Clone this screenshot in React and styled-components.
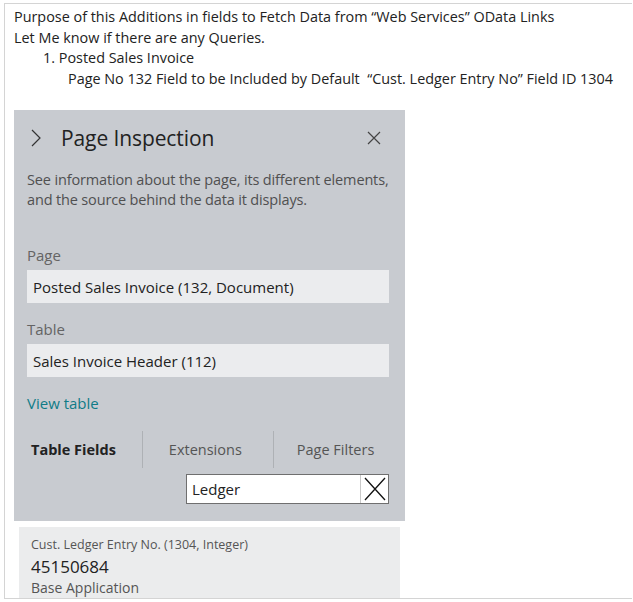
import React from 'react'
import styled, { createGlobalStyle } from 'styled-components'

const GlobalStyle = createGlobalStyle`
    html, body {
        margin: 0;
        padding: 0;
        background: #ffffff;
    }
    body {
        font-family: "Open Sans", "Noto Sans", sans-serif;
        color: #222;
    }
`

const Frame = styled.div`
    margin: 3px 1px 0 4px;
    height: 596px;
    border-top: 1px solid #d4d4d4;
    border-left: 1px solid #d4d4d4;
    border-bottom: 1px solid #d4d4d4;
    padding: 3px 0 0 9px;
    box-sizing: border-box;
    overflow: hidden;
`

const Note = styled.div`
    font-family: "Open Sans", sans-serif;
    font-size: 14.4px;
    line-height: 20.5px;
    color: #222;
    padding-left: ${p => p.indent || 0}px;
    white-space: pre;
`

const Panel = styled.section`
    margin-top: 21px;
    width: 391px;
    background: #c8cbd0;
    padding: 0 16px 17px 13px;
    box-sizing: border-box;
`

const Header = styled.div`
    height: 56px;
    display: flex;
    align-items: center;
    gap: 20px;
    padding-left: 4px;
    padding-right: 8px;
`

const Title = styled.h1`
    flex: 1;
    margin: 0;
    font-size: 21px;
    font-weight: 400;
    color: #222;
    letter-spacing: -0.1px;
`

const IconButton = styled.span`
    display: flex;
    align-items: center;
    justify-content: center;
    color: #444;
`

const Description = styled.p`
    margin: 4px 0 0;
    font-size: 14.5px;
    line-height: 20px;
    color: #505050;
    letter-spacing: -0.15px;
`

const Label = styled.div`
    margin-top: ${p => p.top}px;
    font-size: 15px;
    line-height: 20px;
    color: #646464;
`

const Field = styled.div`
    margin-top: 5px;
    height: 33px;
    background: #ebecee;
    display: flex;
    align-items: center;
    padding-left: 6px;
    font-size: 15px;
    color: #222;
`

const Link = styled.a`
    display: block;
    margin-top: 16px;
    font-size: 15px;
    line-height: 20px;
    color: #0f7c87;
    text-decoration: none;
`

const Tabs = styled.div`
    margin-top: 18px;
    height: 37px;
    display: flex;
`

const Tab = styled.div`
    display: flex;
    align-items: center;
    padding: 0 ${p => p.pr}px 0 ${p => p.pl}px;
    font-size: 14.5px;
    font-weight: ${p => (p.active ? 700 : 400)};
    color: ${p => (p.active ? '#222' : '#555')};
    border-left: ${p => (p.first ? 'none' : '1px solid #aeb1b5')};
`

const SearchRow = styled.div`
    margin-top: 6px;
    display: flex;
    justify-content: flex-end;
`

const SearchBox = styled.div`
    width: 203px;
    height: 30px;
    display: flex;
    border: 1px solid #6f6f6f;
    box-sizing: border-box;
    background: #fff;
`

const SearchInput = styled.div`
    flex: 1;
    display: flex;
    align-items: center;
    padding-left: 5px;
    font-size: 15px;
    color: #222;
    border-right: 1px solid #c9c9c9;
`

const ClearButton = styled.div`
    width: 27px;
    display: flex;
    align-items: center;
    justify-content: center;
`

const Card = styled.div`
    margin: 6px 0 0 5px;
    width: 381px;
    height: 90px;
    background: #ebeced;
    padding: 8px 12px 0;
    box-sizing: border-box;
`

const CardCaption = styled.div`
    font-size: 12.5px;
    line-height: 20px;
    color: #555;
`

const CardValue = styled.div`
    font-size: 17px;
    line-height: 23px;
    color: #222;
`

const CardSource = styled.div`
    font-size: 14px;
    line-height: 20px;
    color: #555;
`

const App = () => (
    <>
        <GlobalStyle />
        <Frame>
            <Note>Purpose of this Additions in fields to Fetch Data from “Web Services” OData Links</Note>
            <Note>Let Me know if there are any Queries.</Note>
            <Note indent={29}>1. Posted Sales Invoice</Note>
            <Note indent={54}>Page No 132 Field to be Included by Default  “Cust. Ledger Entry No” Field ID 1304</Note>

            <Panel>
                <Header>
                    <IconButton>
                        <svg width="10" height="18" viewBox="0 0 10 18">
                            <path d="M1 1 L9 9 L1 17" fill="none" stroke="#333" strokeWidth="1.2" />
                        </svg>
                    </IconButton>
                    <Title>Page Inspection</Title>
                    <IconButton>
                        <svg width="14" height="14" viewBox="0 0 14 14">
                            <path d="M1 1 L13 13 M13 1 L1 13" stroke="#444" strokeWidth="1.2" />
                        </svg>
                    </IconButton>
                </Header>
                <Description>
                    See information about the page, its different elements, and the source behind the data it displays.
                </Description>

                <Label top={35}>Page</Label>
                <Field>Posted Sales Invoice (132, Document)</Field>
                <Label top={16}>Table</Label>
                <Field>Sales Invoice Header (112)</Field>
                <Link>View table</Link>

                <Tabs>
                    <Tab first active pl={4} pr={26}>Table Fields</Tab>
                    <Tab pl={26} pr={31}>Extensions</Tab>
                    <Tab pl={23} pr={0}>Page Filters</Tab>
                </Tabs>

                <SearchRow>
                    <SearchBox>
                        <SearchInput>Ledger</SearchInput>
                        <ClearButton>
                            <svg width="22" height="24" viewBox="0 0 22 24">
                                <path d="M1 1 L21 23 M21 1 L1 23" stroke="#111" strokeWidth="1.3" />
                            </svg>
                        </ClearButton>
                    </SearchBox>
                </SearchRow>
            </Panel>

            <Card>
                <CardCaption>Cust. Ledger Entry No. (1304, Integer)</CardCaption>
                <CardValue>45150684</CardValue>
                <CardSource>Base Application</CardSource>
            </Card>
        </Frame>
    </>
)

export default App
